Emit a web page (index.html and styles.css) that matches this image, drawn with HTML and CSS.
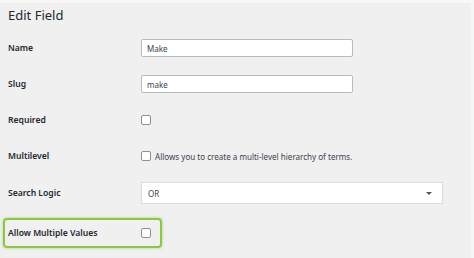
FILE: index.html
```html
<!DOCTYPE html>
<html lang="en">
<head>
    <meta charset="UTF-8">
    <title>Edit Field</title>
    <link rel="stylesheet" href="styles.css">
</head>
<body>
    <div class="wrap">
        <h1>Edit Field</h1>
        <div class="form-table">
            <div class="row">
                <div class="label">Name</div>
                <div class="field"><input type="text" class="text-input" value="Make"></div>
            </div>
            <div class="row">
                <div class="label">Slug</div>
                <div class="field"><input type="text" class="text-input" value="make"></div>
            </div>
            <div class="row">
                <div class="label">Required</div>
                <div class="field"><span class="checkbox"></span></div>
            </div>
            <div class="row">
                <div class="label">Multilevel</div>
                <div class="field">
                    <span class="checkbox"></span>
                    <span class="description">Allows you to create a multi-level hierarchy of terms.</span>
                </div>
            </div>
            <div class="row row-select">
                <div class="label">Search Logic</div>
                <div class="field">
                    <div class="select">
                        <span>OR</span>
                        <span class="arrow"></span>
                    </div>
                </div>
            </div>
            <div class="row row-highlight">
                <div class="highlight">
                    <div class="label">Allow Multiple Values</div>
                    <div class="field"><span class="checkbox"></span></div>
                </div>
            </div>
        </div>
    </div>
</body>
</html>
```

FILE: styles.css
```css
body {
    margin: 0;
    background: #f0f0f1;
    font-family: "Noto Sans", "Open Sans", sans-serif;
    color: #1d2327;
}
.wrap {
    height: 255px;
    width: 471px;
    border-top: 3px solid #f7f7f8;
    border-right: 3px solid #f7f7f8;
    box-sizing: content-box;
}
h1 {
    margin: 0;
    padding: 1px 0 0 8px;
    height: 26px;
    font-size: 13px;
    font-weight: 400;
    line-height: 22px;
    color: #23282d;
}
.row {
    display: grid;
    grid-template-columns: 133px 1fr;
    align-items: center;
    height: 36px;
    padding-left: 8px;
}
.row-select {
    height: 38px;
}
.label {
    font-size: 8.6px;
    font-weight: 600;
    color: #23282d;
}
.field {
    display: flex;
    align-items: center;
    gap: 4px;
}
.text-input {
    width: 212px;
    height: 18px;
    box-sizing: border-box;
    border: 1px solid #b9babd;
    border-radius: 2px;
    background: #fff;
    padding: 0 5px;
    font-family: inherit;
    font-size: 8px;
    color: #3c434a;
    margin: 0;
}
.checkbox {
    display: inline-block;
    width: 10px;
    height: 10px;
    box-sizing: border-box;
    border: 1px solid #8c8f94;
    border-radius: 2px;
    background: #fff;
}
.description {
    font-size: 8.05px;
    color: #3c434a;
}
.select {
    width: 302px;
    height: 22px;
    box-sizing: border-box;
    border: 1px solid #dcdcde;
    background: #fff;
    display: flex;
    align-items: center;
    justify-content: space-between;
    padding: 0 10px 0 6px;
    font-size: 8px;
    color: #3c434a;
}
.arrow {
    width: 0;
    height: 0;
    border-left: 3px solid transparent;
    border-right: 3px solid transparent;
    border-top: 3px solid #50575e;
}
.row-highlight {
    display: block;
    padding: 6px 0 0 3px;
    height: 30px;
}
.highlight {
    display: grid;
    grid-template-columns: 133px 1fr;
    align-items: center;
    width: 159px;
    height: 30px;
    box-sizing: border-box;
    padding-left: 3px;
    border: 2px solid #8dc63f;
    border-radius: 4px;
    box-shadow: 0 0 3px rgba(120, 190, 50, 0.6);
}
```
